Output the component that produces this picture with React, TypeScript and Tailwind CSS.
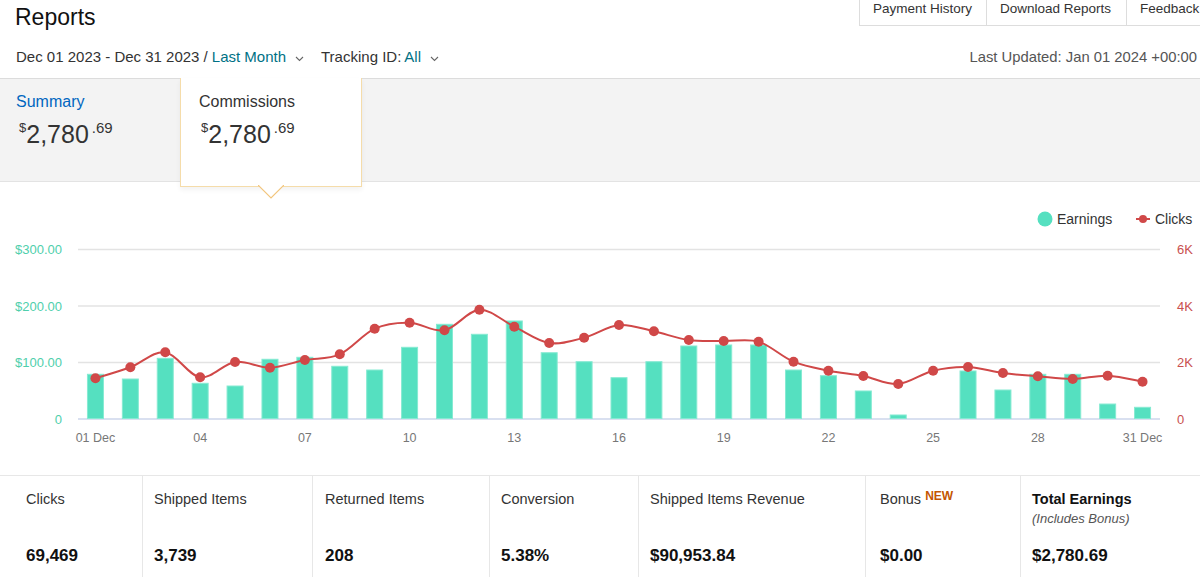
import React from "react";

const earnings = [79.1, 70.8, 107.4, 63.2, 58.4, 105.7, 109.2, 93.3, 86.7, 126.9, 167.6, 149.9, 173.5, 117.3, 101.4, 73.1, 101.4, 129.2, 131, 131, 86.7, 76.6, 49.6, 7.1, 0, 85, 51.3, 79.1, 79.1, 26.5, 20.7];
const clicks = [1441, 1830, 2361, 1476, 2018, 1816, 2089, 2290, 3197, 3409, 3140, 3869, 3267, 2690, 2878, 3328, 3105, 2797, 2761, 2736, 2028, 1710, 1522, 1239, 1710, 1841, 1628, 1512, 1416, 1533, 1320];

// plot geometry (svg coordinates)
const PLOT_LEFT = 78;
const PLOT_RIGHT = 1160;
const BASE_Y = 237;
const TOP_Y = 67.5;
const band = (PLOT_RIGHT - PLOT_LEFT) / 31;
const xAt = (i: number) => PLOT_LEFT + band * (i + 0.5);
const yEarn = (v: number) => BASE_Y - ((BASE_Y - TOP_Y) * v) / 300;
const yClick = (v: number) => BASE_Y - ((BASE_Y - TOP_Y) * v) / 6000;

function splinePath(pts: [number, number][]) {
  let d = `M${pts[0][0].toFixed(1)},${pts[0][1].toFixed(1)}`;
  for (let i = 0; i < pts.length - 1; i++) {
    const p0 = pts[i - 1] || pts[i];
    const p1 = pts[i];
    const p2 = pts[i + 1];
    const p3 = pts[i + 2] || p2;
    const c1x = p1[0] + (p2[0] - p0[0]) / 6;
    const c1y = p1[1] + (p2[1] - p0[1]) / 6;
    const c2x = p2[0] - (p3[0] - p1[0]) / 6;
    const c2y = p2[1] - (p3[1] - p1[1]) / 6;
    d += ` C${c1x.toFixed(1)},${c1y.toFixed(1)} ${c2x.toFixed(1)},${c2y.toFixed(1)} ${p2[0].toFixed(1)},${p2[1].toFixed(1)}`;
  }
  return d;
}

function Chevron() {
  return (
    <svg width="9" height="6" viewBox="0 0 9 6" className="ml-[9px] mt-[3px]">
      <path d="M1 1 L4.5 4.5 L8 1" fill="none" stroke="#666" strokeWidth="1.1" />
    </svg>
  );
}

function Price() {
  return (
    <div className="flex items-start text-[#333]">
      <span className="mt-[1px] text-[13px] leading-[16px]">$</span>
      <span className="text-[25px] leading-[30px]">2,780</span>
      <span className="ml-[3px] mt-[1px] text-[15px] leading-[16px]">.69</span>
    </div>
  );
}

function Chart() {
  const clickPts = clicks.map((c, i) => [xAt(i), yClick(c)] as [number, number]);
  const grid = [
    { y: TOP_Y, l: "$300.00", r: "6K" },
    { y: TOP_Y + (BASE_Y - TOP_Y) / 3, l: "$200.00", r: "4K" },
    { y: TOP_Y + ((BASE_Y - TOP_Y) * 2) / 3, l: "$100.00", r: "2K" },
    { y: BASE_Y, l: "0", r: "0" },
  ];
  const ticks = [0, 3, 6, 9, 12, 15, 18, 21, 24, 27, 30];
  const tickLabel = (i: number) => (i === 0 ? "01 Dec" : i === 30 ? "31 Dec" : String(i + 1).padStart(2, "0"));
  return (
    <svg width="1200" height="293" viewBox="0 0 1200 293" className="block" style={{ fontFamily: "'Liberation Sans', Arial, sans-serif" }}>
      {/* legend */}
      <circle cx="1045" cy="37" r="7.5" fill="#55e0c0" />
      <text x="1057" y="42" fontSize="14" fill="#333">Earnings</text>
      <line x1="1136" y1="37" x2="1150" y2="37" stroke="#d04848" strokeWidth="2" />
      <circle cx="1143" cy="37" r="4" fill="#d04848" />
      <text x="1155" y="42" fontSize="14" fill="#333">Clicks</text>

      {/* grid and axes */}
      {grid.map((g, k) => (
        <g key={k}>
          <line x1={PLOT_LEFT} x2={PLOT_RIGHT} y1={g.y} y2={g.y} stroke={k === 3 ? "#ccd6eb" : "#e3e3e3"} strokeWidth="1.5" />
          <text x="62" y={g.y + 4.5} fontSize="13" fill="#4fcfac" textAnchor="end">{g.l}</text>
          <text x="1177" y={g.y + 4.5} fontSize="13" fill="#c9504f">{g.r}</text>
        </g>
      ))}
      {ticks.map((i) => (
        <text key={i} x={xAt(i)} y="259.5" fontSize="12.5" fill="#777" textAnchor="middle">{tickLabel(i)}</text>
      ))}

      {/* earnings bars */}
      {earnings.map((v, i) =>
        v > 0 ? (
          <rect key={i} x={xAt(i) - 8} y={yEarn(v)} width="16" height={BASE_Y - yEarn(v) - 0.5} fill="#55e0c0" stroke="#86ead2" strokeWidth="1" />
        ) : null
      )}

      {/* clicks line */}
      <path d={splinePath(clickPts)} fill="none" stroke="#d04848" strokeWidth="2" />
      {clickPts.map((p, i) => (
        <circle key={i} cx={p[0]} cy={p[1]} r="5" fill="#d04848" />
      ))}
    </svg>
  );
}

const stats = [
  { w: "w-[142px]", pl: "pl-[26px]", label: "Clicks", value: "69,469" },
  { w: "w-[170px]", pl: "pl-[11px]", label: "Shipped Items", value: "3,739" },
  { w: "w-[177px]", pl: "pl-[12px]", label: "Returned Items", value: "208" },
  { w: "w-[149px]", pl: "pl-[11px]", label: "Conversion", value: "5.38%" },
  { w: "w-[227px]", pl: "pl-[11px]", label: "Shipped Items Revenue", value: "$90,953.84" },
  { w: "w-[155px]", pl: "pl-[14px]", label: "Bonus", value: "$0.00", isNew: true },
  { w: "w-[180px]", pl: "pl-[11px]", label: "Total Earnings", value: "$2,780.69", total: true },
];

export default function App() {
  return (
    <div className="h-[577px] w-[1200px] overflow-hidden bg-white font-['Liberation_Sans',Arial,sans-serif] text-[#333]">
      {/* title row */}
      <div className="flex h-[38px] items-start justify-between">
        <h1 className="pl-[15px] pt-[3px] text-[23px] leading-[28px] text-[#111]">Reports</h1>
        <div className="flex h-[26px] border-b border-[#dddddd] text-[13.5px] leading-[18px] text-[#333]">
          <div className="w-[128px] border-x border-[#dddddd] pl-[13px]">Payment History</div>
          <div className="w-[140px] border-r border-[#dddddd] pl-[13px]">Download Reports</div>
          <div className="w-[73px] pl-[13px]">Feedback</div>
        </div>
      </div>

      {/* filters row */}
      <div className="flex h-[40px] items-center justify-between pb-[1px] text-[15px]">
        <div className="flex items-center pl-[16px]">
          <span className="text-[#333]">Dec 01 2023 - Dec 31 2023 / </span>
          <span className="ml-[4px] text-[#007185]">Last Month</span>
          <Chevron />
          <span className="ml-[17px] text-[#333]">Tracking ID: </span>
          <span className="ml-[3px] text-[#007185]">All</span>
          <Chevron />
        </div>
        <div className="pr-[3px] text-[14.8px] text-[#555]">Last Updated: Jan 01 2024 +00:00</div>
      </div>

      {/* summary band */}
      <div className="flex h-[104px] border-y border-t-[#dcdcdc] border-b-[#e3e3e3] bg-[#f3f3f3]">
        <div className="w-[180px] pl-[16px] pt-[13px]">
          <div className="text-[16px] leading-[20px] text-[#0066c0]">Summary</div>
          <div className="ml-[3px] mt-[7px]">
            <Price />
          </div>
        </div>
        <div className="relative z-10 -mt-px h-[109px] w-[182px] self-start border-x border-b border-[#f5dcaa] bg-white pl-[18px] pt-[14px] shadow-[0_3px_5px_rgba(0,0,0,0.05)]">
          <div className="text-[16px] leading-[20px] text-[#333]">Commissions</div>
          <div className="ml-[2px] mt-[7px]">
            <Price />
          </div>
          <svg width="26" height="14" viewBox="0 0 26 14" className="absolute left-[77px] top-full -mt-px">
            <polygon points="0,0 26,0 13,13" fill="#ffffff" />
            <path d="M0 0 L13 13 L26 0" fill="none" stroke="#f2c57c" strokeWidth="1.2" />
          </svg>
        </div>
      </div>

      {/* chart */}
      <Chart />

      {/* totals row */}
      <div className="flex h-[102px] border-t border-[#e7e7e7]">
        {stats.map((s, i) => (
          <div key={i} className={`${s.w} ${s.pl} flex flex-col justify-between pb-[11px] pt-[14px] ${i > 0 ? "border-l border-[#e7e7e7]" : ""}`}>
            <div>
              {s.total ? (
                <>
                  <div className="text-[14.5px] font-bold leading-[18px] text-[#111]">{s.label}</div>
                  <div className="mt-[3px] text-[13px] italic leading-[16px] text-[#555]">(Includes Bonus)</div>
                </>
              ) : (
                <div className="flex items-start text-[14.5px] leading-[18px] text-[#333]">
                  {s.label}
                  {s.isNew && <span className="ml-[4px] -mt-[3px] text-[12px] font-bold text-[#c45500]">NEW</span>}
                </div>
              )}
            </div>
            <div className="text-[17px] font-bold leading-[20px] text-[#111]">{s.value}</div>
          </div>
        ))}
      </div>
    </div>
  );
}
